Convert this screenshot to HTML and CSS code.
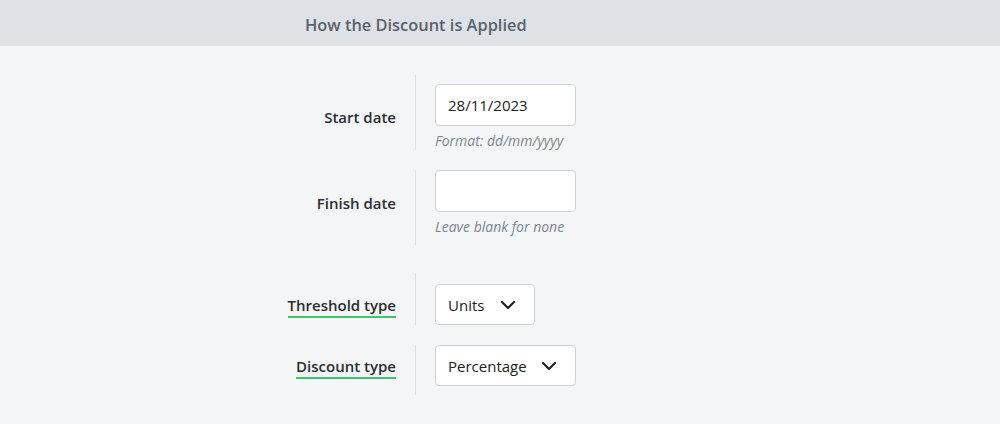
FILE: index.html
```html
<!DOCTYPE html>
<html lang="en">
<head>
<meta charset="utf-8">
<title>How the Discount is Applied</title>
<link rel="stylesheet" href="styles.css">
</head>
<body>
  <header class="section-head">
    <h2 class="section-title">How the Discount is Applied</h2>
  </header>

  <main class="form">
    <section class="group group-dates">
      <div class="row">
        <label class="label" for="start-date">Start date</label>
        <div class="field">
          <input class="input" id="start-date" type="text" value="28/11/2023">
          <p class="hint">Format: dd/mm/yyyy</p>
        </div>
      </div>
      <div class="row">
        <label class="label" for="finish-date">Finish date</label>
        <div class="field">
          <input class="input" id="finish-date" type="text" value="">
          <p class="hint">Leave blank for none</p>
        </div>
      </div>
    </section>

    <section class="group group-types">
      <div class="row">
        <div class="label"><span class="term">Threshold type</span></div>
        <div class="field">
          <button class="select" type="button">
            <span>Units</span>
            <svg class="chev" viewBox="0 0 16 10" width="16" height="10" aria-hidden="true"><path d="M2 2l6 6 6-6" fill="none" stroke="currentColor" stroke-width="2.2" stroke-linecap="round" stroke-linejoin="round"/></svg>
          </button>
        </div>
      </div>
      <div class="row">
        <div class="label"><span class="term">Discount type</span></div>
        <div class="field">
          <button class="select" type="button">
            <span>Percentage</span>
            <svg class="chev" viewBox="0 0 16 10" width="16" height="10" aria-hidden="true"><path d="M2 2l6 6 6-6" fill="none" stroke="currentColor" stroke-width="2.2" stroke-linecap="round" stroke-linejoin="round"/></svg>
          </button>
        </div>
      </div>
    </section>
  </main>
</body>
</html>
```

FILE: styles.css
```css
* { box-sizing: border-box; }

html, body {
  margin: 0;
  padding: 0;
  background: #f4f5f7;
  font-family: "Open Sans", "Noto Sans", sans-serif;
  color: #2a2e33;
}

.section-head {
  height: 46px;
  background: #dee1e5;
  display: flex;
  align-items: center;
  padding-left: 305px;
  padding-top: 3px;
}

.section-title {
  margin: 0;
  font-size: 16.4px;
  font-weight: 600;
  color: #59626c;
}

.form {
  padding-top: 29px;
  display: flex;
  flex-direction: column;
  gap: 28px;
}

.group {
  display: flex;
  flex-direction: column;
}

.group-dates { gap: 20px; }
.group-types { gap: 20px; }

.row {
  display: grid;
  grid-template-columns: 396px 1fr;
  column-gap: 19px;
  align-items: stretch;
}

.label {
  display: flex;
  align-items: center;
  justify-content: flex-end;
  font-size: 15px;
  font-weight: 600;
  color: #2a2e33;
}

.field {
  border-left: 1px solid #dcdfe3;
  padding-left: 19px;
  display: flex;
  flex-direction: column;
  justify-content: center;
}

/* Vertical breathing room at each end of a group; applied to both
   columns so the labels stay centred on their controls. */
.group-dates .row:first-child > * { padding-top: 9px; }
.group-dates .row:last-child > * { padding-bottom: 9px; }
.group-types .row:first-child > * { padding-top: 11px; }
.group-types .row:last-child > * { padding-bottom: 9px; }

.input {
  width: 141px;
  height: 42px;
  border: 1px solid #cdd2d8;
  border-radius: 4px;
  background: #fff;
  padding: 0 12px;
  font: 400 15px "Open Sans", "Noto Sans", sans-serif;
  color: #222;
  outline: none;
}

.hint {
  margin: 6px 0 0;
  line-height: 18px;
  font-size: 14px;
  font-style: italic;
  color: #7d8591;
}

.term {
  display: inline-block;
  line-height: 21px;
  border-bottom: 2px solid #3dc46c;
  margin-top: 4px;
}

.select {
  align-self: flex-start;
  min-width: 100px;
  height: 41px;
  display: inline-flex;
  align-items: center;
  justify-content: space-between;
  gap: 14px;
  padding: 0 18px 0 12px;
  border: 1px solid #cdd2d8;
  border-radius: 4px;
  background: #fff;
  font: 400 15px "Open Sans", "Noto Sans", sans-serif;
  color: #222;
  cursor: pointer;
}

.chev {
  color: #1f2226;
  display: block;
}
```
